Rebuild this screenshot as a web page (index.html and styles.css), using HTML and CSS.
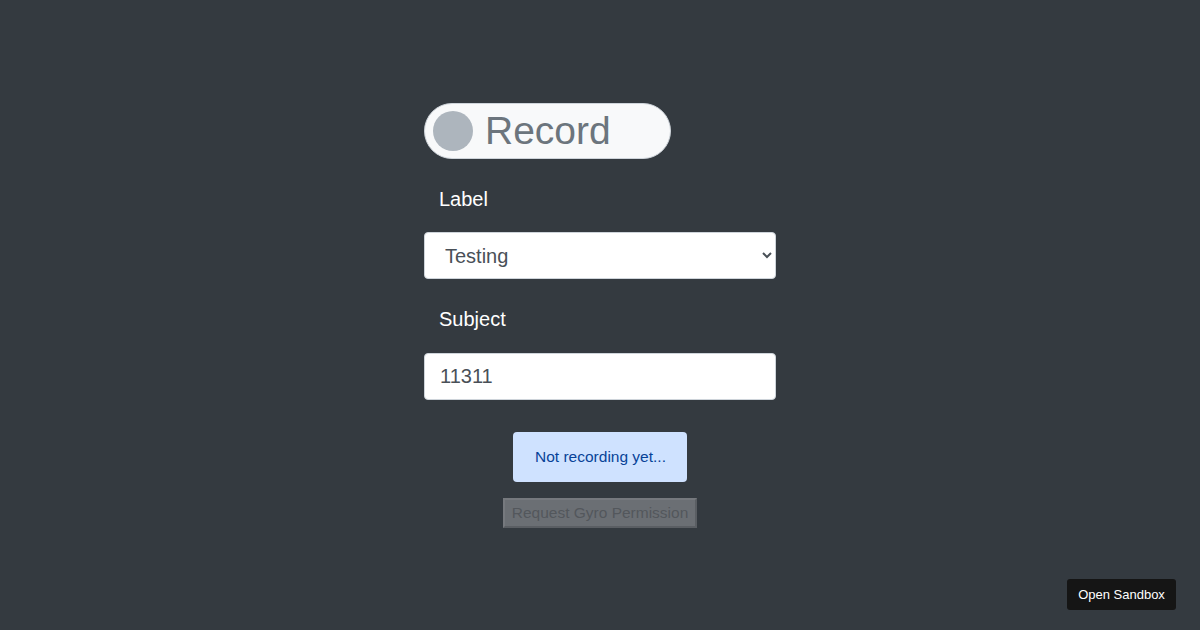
FILE: index.html
```html
<!DOCTYPE html>
<html>
<head>
<meta charset="utf-8">
<link rel="stylesheet" href="styles.css">
</head>
<body>
<main class="panel">
  <div class="toggle">
    <span class="knob"></span>
    <span class="toggle-text">Record</span>
  </div>
  <div class="field-label label-first">Label</div>
  <select class="control select">
    <option>Testing</option>
  </select>
  <div class="field-label">Subject</div>
  <input class="control input" type="text" value="11311">
  <div class="status">Not recording yet...</div>
  <button class="gyro" disabled>Request Gyro Permission</button>
</main>
<a class="sandbox">Open Sandbox</a>
</body>
</html>
```
FILE: styles.css
```css
html, body {
  margin: 0;
  padding: 0;
  background: #343a40;
  font-family: "Liberation Sans", Arial, sans-serif;
}
body {
  height: 630px;
  overflow: hidden;
}
.panel {
  width: 352px;
  margin: 103px auto 0;
  display: flex;
  flex-direction: column;
}
.toggle {
  box-sizing: border-box;
  width: 247px;
  height: 56px;
  border-radius: 28px;
  border: 1px solid #ced4da;
  background: #f8f9fa;
  display: flex;
  align-items: center;
  padding-left: 8px;
}
.knob {
  width: 40px;
  height: 40px;
  border-radius: 50%;
  background: #adb5bd;
  flex: none;
}
.toggle-text {
  margin-left: 12px;
  font-size: 39px;
  line-height: 48px;
  color: #6c757d;
}
.field-label {
  color: #ffffff;
  font-size: 20px;
  line-height: 24px;
  padding-left: 15px;
  margin-top: 28px;
}
.control {
  box-sizing: border-box;
  width: 352px;
  height: 47px;
  margin: 21px 0 0;
  border: 1px solid #ced4da;
  border-radius: 4px;
  background: #ffffff;
  font-family: "Liberation Sans", Arial, sans-serif;
  font-size: 20px;
  color: #495057;
}
.select {
  padding: 0 8px 0 16px;
}
.input {
  margin-top: 22px;
  padding: 0 15px;
  outline: none;
}
.status {
  align-self: center;
  margin-top: 32px;
  height: 50px;
  box-sizing: border-box;
  padding: 0 21px 0 22px;
  display: flex;
  align-items: center;
  background: #cfe2ff;
  color: #084298;
  font-size: 15.5px;
  border-radius: 4px;
}
.gyro {
  align-self: center;
  margin-top: 16px;
  box-sizing: border-box;
  width: 194px;
  height: 30px;
  padding: 0;
  font-family: "Liberation Sans", Arial, sans-serif;
  font-size: 15.5px;
  color: #53575c;
  background: #6b6f74;
  border: 2px solid;
  border-color: #76797e #5a5e63 #5a5e63 #76797e;
}
.sandbox {
  position: fixed;
  right: 24px;
  bottom: 20px;
  width: 109px;
  height: 31px;
  box-sizing: border-box;
  display: flex;
  align-items: center;
  justify-content: center;
  background: #151515;
  color: #ffffff;
  font-size: 13px;
  border-radius: 3px;
}
```
